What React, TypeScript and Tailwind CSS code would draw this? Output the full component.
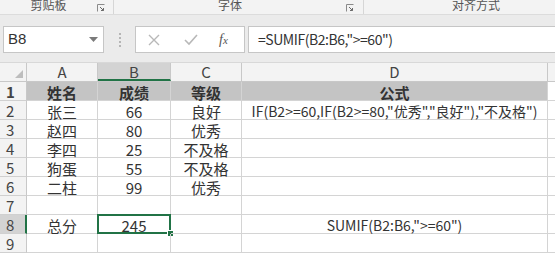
import React from "react";

const font = { fontFamily: '"Noto Sans CJK SC", "Liberation Sans", sans-serif' };

const cols = [
  { w: "w-[71px]" },
  { w: "w-[73px]" },
  { w: "w-[71px]" },
  { w: "w-[306px]" },
];

type Row = { n: string; cells: string[]; bold?: boolean };

const rows: Row[] = [
  { n: "1", cells: ["姓名", "成绩", "等级", "公式"], bold: true },
  { n: "2", cells: ["张三", "66", "良好", 'IF(B2>=60,IF(B2>=80,"优秀","良好"),"不及格")'] },
  { n: "3", cells: ["赵四", "80", "优秀", ""] },
  { n: "4", cells: ["李四", "25", "不及格", ""] },
  { n: "5", cells: ["狗蛋", "55", "不及格", ""] },
  { n: "6", cells: ["二柱", "99", "优秀", ""] },
  { n: "7", cells: ["", "", "", ""] },
  { n: "8", cells: ["总分", "245", "", 'SUMIF(B2:B6,">=60")'] },
  { n: "9", cells: ["", "", "", ""] },
];

function Launcher() {
  return (
    <svg width="8" height="8" viewBox="0 0 8 8" className="mt-[4px] shrink-0">
      <path d="M0.5 7.5 V0.5 H7.5" stroke="#8a8a8a" fill="none" strokeWidth="1" />
      <path d="M3 3 L6.5 6.5 M6.5 4 V6.5 H4" stroke="#6a6a6a" fill="none" strokeWidth="1" />
    </svg>
  );
}

export default function App() {
  return (
    <div className="w-[555px] h-[254px] overflow-hidden bg-white text-[#333]" style={font}>
      {/* Ribbon group labels */}
      <div className="h-[15px] flex bg-[#f3f3f3] border-b border-[#dcdcdc] text-[12px] text-[#555] overflow-hidden">
        <div className="w-[114px] shrink-0 flex border-r border-[#d6d6d6]">
          <div className="w-[97px] shrink-0 flex justify-center leading-[12px] mt-[-1px]">剪贴板</div>
          <Launcher />
        </div>
        <div className="w-[250px] shrink-0 flex border-r border-[#d6d6d6]">
          <div className="w-[232px] shrink-0 flex justify-center leading-[12px] mt-[-1px]">字体</div>
          <Launcher />
        </div>
        <div className="w-[224px] shrink-0 flex justify-center leading-[12px] mt-[-1px]">对齐方式</div>
      </div>

      {/* Formula bar */}
      <div className="h-[48px] bg-[#ebebeb] flex items-start pt-[11px] border-b border-[#d8d8d8]">
        <div className="ml-[3px] w-[101px] h-[27px] bg-white border border-[#c6c6c6] flex items-center justify-between pl-[4px] pr-[5px]">
          <span className="text-[15px] text-[#333]" style={{ fontFamily: '"Liberation Sans", sans-serif' }}>B8</span>
          <svg width="9" height="5" viewBox="0 0 9 5"><path d="M0 0 H9 L4.5 5 Z" fill="#7a7a7a" /></svg>
        </div>
        <div className="w-[31px] h-[27px] flex flex-col items-center justify-center gap-[2px]">
          <div className="w-[2px] h-[2px] bg-[#b5b5b5]" />
          <div className="w-[2px] h-[2px] bg-[#b5b5b5]" />
          <div className="w-[2px] h-[2px] bg-[#b5b5b5]" />
          <div className="w-[2px] h-[2px] bg-[#b5b5b5]" />
        </div>
        <div className="w-[110px] h-[27px] bg-white border border-[#c6c6c6] flex items-center">
          <svg width="12" height="12" viewBox="0 0 12 12" className="ml-[12px]">
            <path d="M1 1 L11 11 M11 1 L1 11" stroke="#b8b8b8" strokeWidth="1.4" />
          </svg>
          <svg width="14" height="12" viewBox="0 0 14 12" className="ml-[24px]">
            <path d="M1 6 L5 10 L13 1" stroke="#b8b8b8" strokeWidth="1.6" fill="none" />
          </svg>
          <span className="ml-[21px] text-[14px] italic text-[#555]" style={{ fontFamily: '"Liberation Serif", serif' }}>
            f<span className="text-[11px]">x</span>
          </span>
        </div>
        <div className="ml-[3px] flex-1 h-[27px] bg-white border border-[#c6c6c6] border-r-0 flex items-center pl-[9px] text-[14px] tracking-[-0.45px] text-[#333]">
          =SUMIF(B2:B6,"&gt;=60")
        </div>
      </div>

      {/* Column headers */}
      <div className="h-[19px] flex bg-[#f3f3f3] border-b border-[#c8c8c8] text-[15px] leading-[18px] text-[#444]">
        <div className="w-[27px] shrink-0 border-r border-[#c8c8c8] relative">
          <svg width="8" height="8" viewBox="0 0 8 8" className="absolute right-[3px] bottom-[3px]">
            <path d="M8 0 L8 8 L0 8 Z" fill="#bdbdbd" />
          </svg>
        </div>
        {["A", "B", "C", "D"].map((l, i) => (
          <div
            key={l}
            className={`${cols[i].w} shrink-0 flex justify-center border-r ${
              i === 1 ? "bg-[#d3d3d3] border-b-2 border-b-[#217346] border-[#c8c8c8]" : "border-[#c8c8c8]"
            }`}
          >
            {l}
          </div>
        ))}
        <div className="flex-1" />
      </div>

      {/* Rows */}
      {rows.map((r) => {
        const sel = r.n === "8";
        return (
          <div
            key={r.n}
            className={`h-[19px] flex text-[15px] leading-[17px] ${r.bold ? "bg-[#c4c4c4] font-bold" : ""}`}
          >
            <div
              className={`w-[27px] shrink-0 pl-[6px] pt-[1px] border-b border-[#d0d0d0] text-[#444] ${
                sel ? "bg-[#d3d3d3] border-r-2 border-r-[#217346]" : "bg-[#f3f3f3] border-r border-r-[#c8c8c8]"
              }`}
            >
              {r.n}
            </div>
            {r.cells.map((c, i) => (
              <div
                key={i}
                className={`${cols[i].w} shrink-0 flex justify-center pt-[2px] whitespace-nowrap border-b border-r border-[#d4d4d4] relative ${
                  i === 3 && !r.bold ? "text-[14px]" : ""
                }`}
              >
                {c}
                {sel && i === 1 && (
                  <>
                    <div className="absolute left-[-1px] top-[-1px] right-[-1px] bottom-[-1px] border-2 border-[#217346]" />
                    <div className="absolute right-[-4px] bottom-[-4px] w-[5px] h-[5px] bg-[#217346] border border-white box-content" />
                  </>
                )}
              </div>
            ))}
            <div className="flex-1 bg-white border-b border-[#d4d4d4]" />
          </div>
        );
      })}
    </div>
  );
}
